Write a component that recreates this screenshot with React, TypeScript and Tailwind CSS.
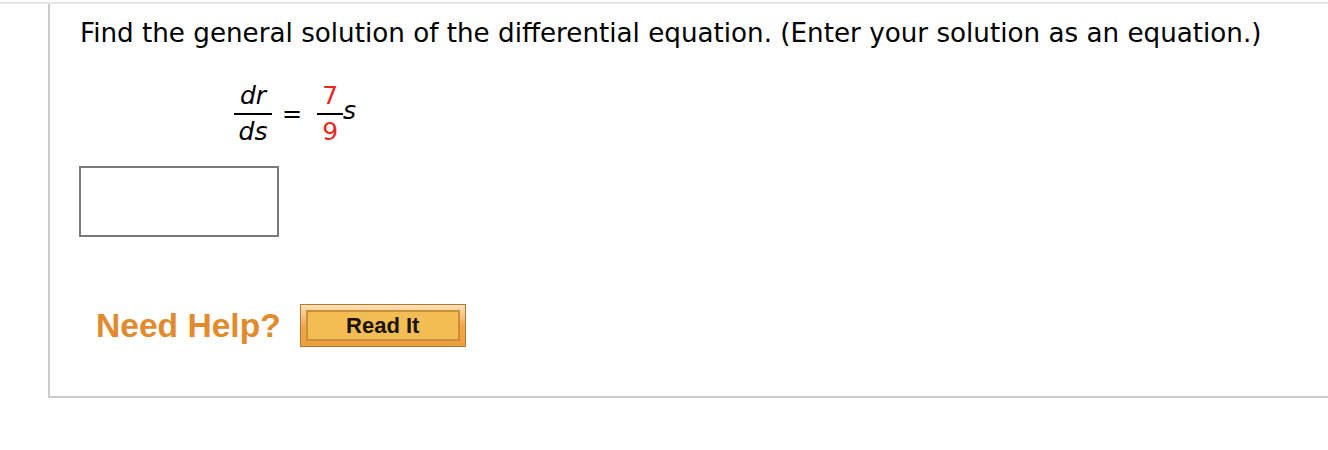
const font = { fontFamily: '"DejaVu Sans", Verdana, sans-serif' };
const arial = { fontFamily: '"Liberation Sans", Arial, sans-serif' };

export default function App() {
  return (
    <div className="bg-white pt-[2px] text-black">
      <div className="border-t-2 border-[#e6e6e6]">
        <div className="ml-12 h-[394px] border-b-2 border-l-2 border-[#cccccc] pl-[30px] pt-[12px]">
          <p className="text-[26.2px] leading-[34px]" style={font}>
            Find the general solution of the differential equation. (Enter your solution as an equation.)
          </p>

          <div className="mt-[29px] ml-[154px] flex items-center text-[25px]" style={font}>
            <span className="inline-flex flex-col items-center italic">
              <span className="leading-[34px]">dr</span>
              <span className="h-[2px] w-[38px] bg-black" />
              <span className="leading-[34px]">ds</span>
            </span>
            <span className="ml-[10px] mr-[15px] text-[24px]">=</span>
            <span className="inline-flex flex-col items-center text-[#e8261c]">
              <span className="leading-[34px]">7</span>
              <span className="h-[2px] w-[26px] bg-black" />
              <span className="leading-[34px]">9</span>
            </span>
            <span className="-mt-[6px] italic">s</span>
          </div>

          <input
            type="text"
            className="-ml-[1px] mt-[17px] block h-[71px] w-[200px] border-2 border-[#7a7a7a] outline-none"
          />

          <div className="mt-[67px] ml-[16px] flex items-center gap-[19px]">
            <span className="text-[33.6px] font-bold leading-[42px] text-[#e28a2e]" style={arial}>
              Need Help?
            </span>
            <button className="h-[43px] w-[166px] border border-[#b07934] bg-gradient-to-b from-[#fbe2b8] via-[#f0a847] to-[#ee9f3e] p-[5px]">
              <span
                className="flex h-full w-full items-center justify-center border-2 border-[#c98f3b] bg-[#f3bd56] text-[22px] font-bold text-[#1b1308]"
                style={arial}
              >
                Read It
              </span>
            </button>
          </div>
        </div>
      </div>
    </div>
  );
}
